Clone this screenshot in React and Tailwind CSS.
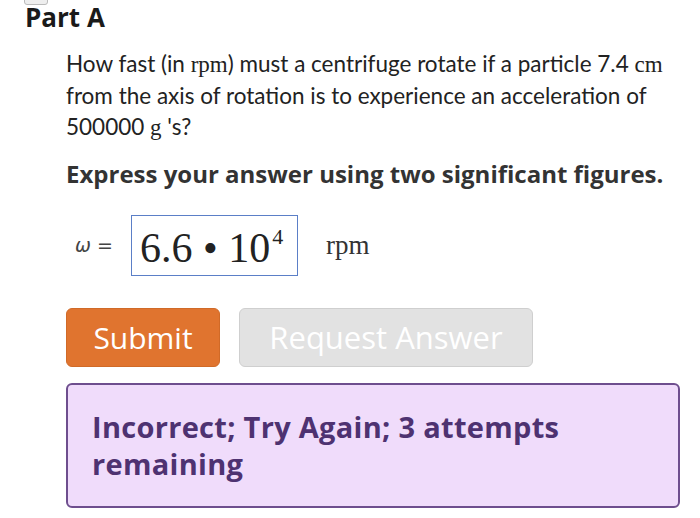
export default function App() {
  return (
    <div className="w-[700px] h-[518px] bg-white overflow-hidden relative text-[#222] font-['Lato','Open_Sans',sans-serif]">
      <div className="absolute left-[24px] top-[-14px] w-[24px] h-[19px] border border-[#bbb] rounded-[3px] bg-[#eee]"></div>
      <div className="pl-[25px] text-[26px] font-bold leading-[34px] text-[#1a1a1a] font-['Open_Sans','Lato',sans-serif]">Part A</div>
      <div className="pl-[66px] pt-[14px]">
        <p className="text-[22.5px] leading-[31px] text-[#222] whitespace-nowrap">
          How fast (in <span className="text-[23px] font-['Liberation_Serif',serif]">rpm</span>) must a centrifuge rotate if a particle 7.4 <span className="text-[23px] font-['Liberation_Serif',serif]">cm</span>
          <br />
          from the axis of rotation is to experience an acceleration of
          <br />
          500000 <span className="text-[23px] font-['Liberation_Serif',serif]">g</span> 's?
        </p>
        <p className="mt-[16px] text-[24px] font-bold leading-[30px] text-[#333] whitespace-nowrap font-['Open_Sans','Lato',sans-serif]">Express your answer using two significant figures.</p>
        <div className="flex items-center mt-[26px] h-[61px]">
          <span className="ml-[9px] text-[19px] text-[#444] w-[45px] font-['DejaVu_Sans',sans-serif]">
            <span className="italic">ω</span> =
          </span>
          <div className="ml-[11px] w-[167px] h-[61px] border-[1.5px] border-[#5b7fc7] flex items-center pl-[8px] pt-[4px] font-['Liberation_Serif',serif]">
            <span className="text-[42px] text-[#222] leading-none">6.6 • 10<sup className="text-[22px] relative top-[-18px] ml-[2px]">4</sup></span>
          </div>
          <span className="ml-[28px] text-[27px] text-[#333] font-['Liberation_Serif',serif]">rpm</span>
        </div>
        <div className="flex gap-[19px] mt-[32px] font-['Open_Sans','Lato',sans-serif]">
          <button className="w-[154px] h-[59px] rounded-[6px] bg-[#e0742f] border border-[#d06a28] text-white text-[30px]">Submit</button>
          <button className="w-[294px] h-[59px] rounded-[6px] bg-[#e2e2e2] border border-[#cfcfcf] text-white text-[31px]">Request Answer</button>
        </div>
        <div className="mt-[16px] w-[614px] h-[125px] rounded-[6px] bg-[#f0dcfb] border-2 border-[#6e4e8e] pl-[24px] pt-[23px]">
          <p className="text-[29px] font-bold leading-[37px] tracking-[0.3px] text-[#4e3271] w-[520px] font-['Open_Sans','Lato',sans-serif]">Incorrect; Try Again; 3 attempts remaining</p>
        </div>
      </div>
    </div>
  );
}
